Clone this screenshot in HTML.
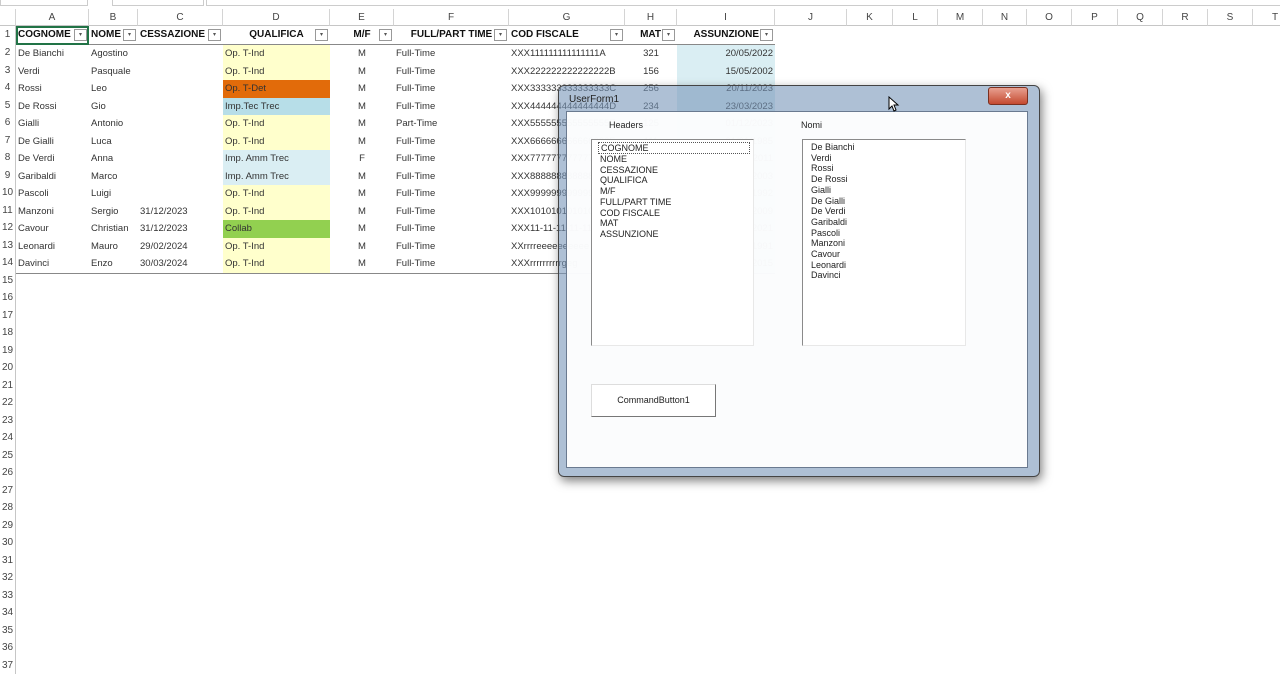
<!DOCTYPE html>
<html><head><meta charset="utf-8"><style>
body{margin:0;width:1280px;height:666px;overflow:hidden;background:#fff;font-family:"Liberation Sans",sans-serif;position:relative}
.a{position:absolute}
.ch{position:absolute;top:9px;height:17px;border-right:1px solid #d4d4d4;border-bottom:1px solid #c6c6c6;font-size:10px;color:#444;text-align:center;line-height:17px;background:#fff;box-sizing:border-box}
.rh{position:absolute;left:0;width:16px;border-right:1px solid #c6c6c6;font-size:10px;color:#444;text-align:center;box-sizing:border-box;line-height:17.5px;height:17.5px}
table{position:absolute;left:16px;top:26px;border-collapse:collapse;table-layout:fixed}
td{padding:0 2px;font-size:9.5px;color:#333;white-space:nowrap;overflow:hidden;height:17.5px;line-height:17.5px}
tr.h td{height:18px;font-weight:bold;font-size:10px;color:#111;border-bottom:1.5px solid #888;position:relative}
.f{display:inline-block;width:13px;height:12px;border:1px solid #999;box-sizing:border-box;position:absolute;right:2px;top:3px;background:#fff;font-size:6px;line-height:10px;text-align:center;color:#555;font-weight:normal}
.y{background:#ffffcc}.o{background:#e26b0a}.b{background:#b7dee8}.lb{background:#daeef3}.g{background:#92d050}.c{text-align:center}.r{text-align:right}
.lst{position:absolute;border:1px solid #8a8a8a;border-right-color:#e8e8e8;border-bottom-color:#e8e8e8;background:#fff;font-size:9px;line-height:10.7px;color:#222;padding:2px 0 0 8px;box-sizing:border-box}
</style></head><body>
<div class="a" style="left:0;top:0;width:1280px;height:9px;background:#fff;border-bottom:1px solid #e0e0e0"></div>
<div class="a" style="left:0;top:0;width:86px;height:5px;border:1px solid #ccc;border-top:0"></div>
<div class="a" style="left:112px;top:0;width:90px;height:5px;border:1px solid #ccc;border-top:0"></div>
<div class="a" style="left:206px;top:0;width:1074px;height:5px;border:1px solid #ccc;border-top:0"></div>
<div class="ch" style="left:0;width:16px"></div>
<div class="ch" style="left:16px;width:73px">A</div><div class="ch" style="left:89px;width:49px">B</div><div class="ch" style="left:138px;width:85px">C</div><div class="ch" style="left:223px;width:107px">D</div><div class="ch" style="left:330px;width:64px">E</div><div class="ch" style="left:394px;width:115px">F</div><div class="ch" style="left:509px;width:116px">G</div><div class="ch" style="left:625px;width:52px">H</div><div class="ch" style="left:677px;width:98px">I</div><div class="ch" style="left:775px;width:72px">J</div><div class="ch" style="left:847px;width:46px">K</div><div class="ch" style="left:893px;width:45px">L</div><div class="ch" style="left:938px;width:45px">M</div><div class="ch" style="left:983px;width:44px">N</div><div class="ch" style="left:1027px;width:45px">O</div><div class="ch" style="left:1072px;width:46px">P</div><div class="ch" style="left:1118px;width:45px">Q</div><div class="ch" style="left:1163px;width:45px">R</div><div class="ch" style="left:1208px;width:45px">S</div><div class="ch" style="left:1253px;width:45px">T</div>
<div class="rh" style="top:26px;height:18px;line-height:18px">1</div>
<div id="rhs"></div>
<table>
<colgroup><col style="width:73px"><col style="width:49px"><col style="width:85px"><col style="width:107px"><col style="width:64px"><col style="width:115px"><col style="width:116px"><col style="width:52px"><col style="width:98px"></colgroup>
<tr class="h"><td style="outline:2px solid #217346;outline-offset:-2px">COGNOME<span class="f">▾</span></td><td>NOME<span class="f">▾</span></td><td>CESSAZIONE<span class="f">▾</span></td><td class="c">QUALIFICA<span class="f">▾</span></td><td class="c">M/F<span class="f">▾</span></td><td class="c">FULL/PART TIME<span class="f">▾</span></td><td>COD FISCALE<span class="f">▾</span></td><td class="r" style="padding-right:16px">MAT<span class="f">▾</span></td><td class="r" style="padding-right:16px">ASSUNZIONE<span class="f">▾</span></td></tr>
<tr><td>De Bianchi</td><td>Agostino</td><td></td><td class="y">Op. T-Ind</td><td class="c">M</td><td>Full-Time</td><td>XXX111111111111111A</td><td class="c">321</td><td class="r lb">20/05/2022</td></tr>
<tr><td>Verdi</td><td>Pasquale</td><td></td><td class="y">Op. T-Ind</td><td class="c">M</td><td>Full-Time</td><td>XXX222222222222222B</td><td class="c">156</td><td class="r lb">15/05/2002</td></tr>
<tr><td>Rossi</td><td>Leo</td><td></td><td class="o">Op. T-Det</td><td class="c">M</td><td>Full-Time</td><td>XXX333333333333333C</td><td class="c">256</td><td class="r lb">20/11/2023</td></tr>
<tr><td>De Rossi</td><td>Gio</td><td></td><td class="b">Imp.Tec Trec</td><td class="c">M</td><td>Full-Time</td><td>XXX444444444444444D</td><td class="c">234</td><td class="r lb">23/03/2023</td></tr>
<tr><td>Gialli</td><td>Antonio</td><td></td><td class="y">Op. T-Ind</td><td class="c">M</td><td>Part-Time</td><td>XXX555555555555555E</td><td class="c">125</td><td class="r lb">01/12/2023</td></tr>
<tr><td>De Gialli</td><td>Luca</td><td></td><td class="y">Op. T-Ind</td><td class="c">M</td><td>Full-Time</td><td>XXX666666666666666F</td><td class="c">111</td><td class="r lb">01/01/1985</td></tr>
<tr><td>De Verdi</td><td>Anna</td><td></td><td class="lb">Imp. Amm Trec</td><td class="c">F</td><td>Full-Time</td><td>XXX777777777777777G</td><td class="c">112</td><td class="r lb">01/01/2011</td></tr>
<tr><td>Garibaldi</td><td>Marco</td><td></td><td class="lb">Imp. Amm Trec</td><td class="c">M</td><td>Full-Time</td><td>XXX888888888888888H</td><td class="c">113</td><td class="r lb">01/01/2003</td></tr>
<tr><td>Pascoli</td><td>Luigi</td><td></td><td class="y">Op. T-Ind</td><td class="c">M</td><td>Full-Time</td><td>XXX999999999999999I</td><td class="c">114</td><td class="r lb">01/01/1992</td></tr>
<tr><td>Manzoni</td><td>Sergio</td><td>31/12/2023</td><td class="y">Op. T-Ind</td><td class="c">M</td><td>Full-Time</td><td>XXX10101010101010L</td><td class="c">115</td><td class="r lb">01/01/2009</td></tr>
<tr><td>Cavour</td><td>Christian</td><td>31/12/2023</td><td class="g">Collab</td><td class="c">M</td><td>Full-Time</td><td>XXX11-11-11-11-11</td><td class="c">116</td><td class="r lb">01/01/2021</td></tr>
<tr><td>Leonardi</td><td>Mauro</td><td>29/02/2024</td><td class="y">Op. T-Ind</td><td class="c">M</td><td>Full-Time</td><td>XXrrrreeeeeeeeee</td><td class="c">117</td><td class="r lb">01/01/1991</td></tr>
<tr><td style="border-bottom:1px solid #888">Davinci</td><td style="border-bottom:1px solid #888">Enzo</td><td style="border-bottom:1px solid #888">30/03/2024</td><td class="y" style="border-bottom:1px solid #888">Op. T-Ind</td><td class="c" style="border-bottom:1px solid #888">M</td><td style="border-bottom:1px solid #888">Full-Time</td><td style="border-bottom:1px solid #888">XXXrrrrrrrrrrgeg</td><td class="c" style="border-bottom:1px solid #888">118</td><td class="r lb" style="border-bottom:1px solid #888">01/01/2015</td></tr>
</table>
<script>
var s='';for(var i=2;i<=37;i++){s+='<div class="rh" style="top:'+(44+(i-2)*17.5)+'px">'+i+'</div>';}document.getElementById('rhs').innerHTML=s;
</script>
<div class="a" style="left:558px;top:85px;width:480px;height:390px;border-radius:6px;background:rgba(120,150,185,0.6);box-shadow:2px 4px 10px rgba(0,0,0,0.5);border:1px solid #444"></div>
<div class="a" style="left:569px;top:94px;font-size:10px;color:#222">UserForm1</div>
<div class="a" style="left:988px;top:87px;width:38px;height:16px;border-radius:3px;background:linear-gradient(#e8a090,#c44a30);border:1px solid #7a3020;color:#fff;font-size:10px;text-align:center;line-height:15px;font-weight:bold">x</div>
<div class="a" style="left:566px;top:111px;width:460px;height:355px;background:rgba(255,255,255,0.95);border:1px solid #6a7a90"></div>
<div class="a" style="left:609px;top:120px;font-size:9px;color:#222">Headers</div>
<div class="a" style="left:801px;top:120px;font-size:9px;color:#222">Nomi</div>
<div class="lst" style="left:591px;top:139px;width:163px;height:207px"><div style="border:1px dotted #555;margin-left:-2px;padding-left:2px;width:148px;height:10px;line-height:10px">COGNOME</div>NOME<br>CESSAZIONE<br>QUALIFICA<br>M/F<br>FULL/PART TIME<br>COD FISCALE<br>MAT<br>ASSUNZIONE</div>
<div class="lst" style="left:802px;top:139px;width:164px;height:207px">De Bianchi<br>Verdi<br>Rossi<br>De Rossi<br>Gialli<br>De Gialli<br>De Verdi<br>Garibaldi<br>Pascoli<br>Manzoni<br>Cavour<br>Leonardi<br>Davinci</div>
<div class="a" style="left:591px;top:384px;width:125px;height:33px;box-sizing:border-box;border:1px solid #ddd;border-right-color:#777;border-bottom-color:#777;background:#fff;font-size:9px;text-align:center;line-height:31px;color:#222">CommandButton1</div>
<svg class="a" style="left:888px;top:96px" width="12" height="16"><path d="M1 1 L1 13 L4 10 L6 15 L8 14 L6 9 L10 9 Z" fill="#fff" stroke="#000" stroke-width="1"/></svg>
</body></html>
